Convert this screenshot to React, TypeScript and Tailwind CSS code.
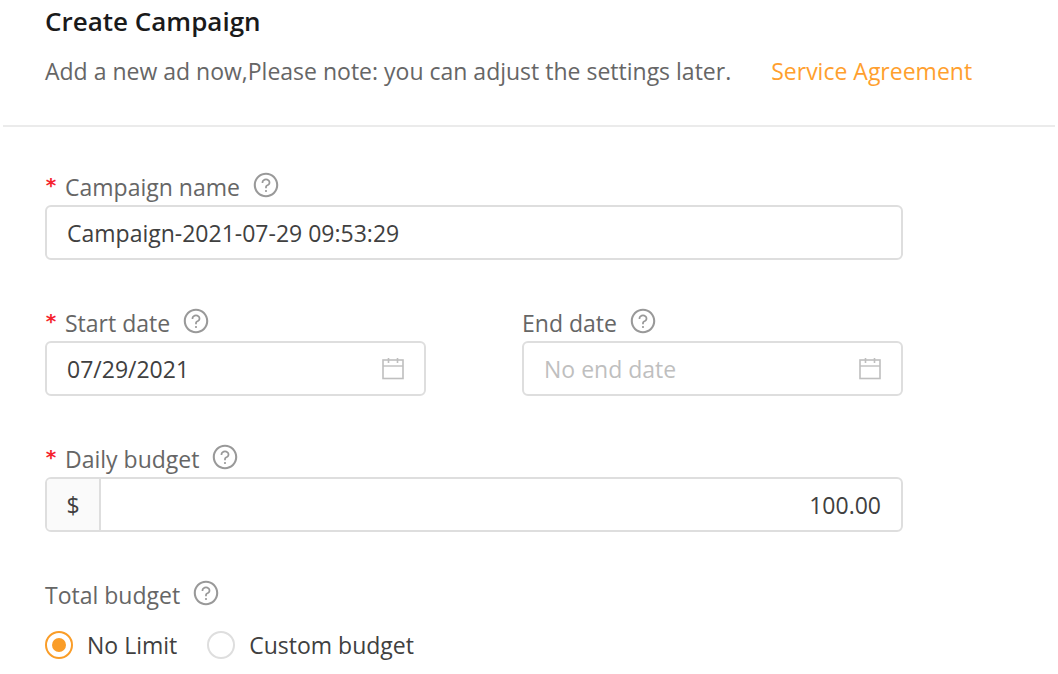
import { useState } from 'react'
import type { ReactNode } from 'react'
import { AiOutlineQuestionCircle } from 'react-icons/ai'

const CalendarIcon = () => (
    <svg width="22" height="22" viewBox="0 0 22 22" fill="none" stroke="#bfbfbf" aria-hidden="true">
        <rect x="1" y="2" width="20" height="18.5" strokeWidth="1.6" />
        <path d="M1 8h20" strokeWidth="1.4" />
        <path d="M6.5 0v5M15.5 0v5" strokeWidth="1.6" />
    </svg>
)

const Required = () => (
    <span
        aria-hidden="true"
        className="w-5 pb-1 font-['DejaVu_Sans_Mono',monospace] text-xl leading-8 font-bold text-[#f5222d]"
    >
        *
    </span>
)

const HelpButton = ({ topic }: { topic: string }) => (
    <button type="button" aria-label={`About ${topic}`} className="ml-3 pb-1 text-[#999]">
        <AiOutlineQuestionCircle size={28} />
    </button>
)

interface FieldProps {
    id: string
    label: string
    required?: boolean
    children: ReactNode
}

const Field = ({ id, label, required, children }: FieldProps) => (
    <div>
        <div className="flex h-9 items-center text-[#666]">
            {required && <Required />}
            <label htmlFor={id}>{label}</label>
            <HelpButton topic={label} />
        </div>
        {children}
    </div>
)

const boxStyle = 'flex h-[55px] items-center rounded-md border-2 border-[#dedede] bg-white'
const inputStyle = 'h-full w-full min-w-0 bg-transparent px-5 outline-none placeholder:text-[#bfbfbf]'

interface DateFieldProps {
    id: string
    label: string
    required?: boolean
    value: string
    placeholder?: string
    onChange: (value: string) => void
}

const DateField = ({ id, label, required, value, placeholder, onChange }: DateFieldProps) => (
    <Field id={id} label={label} required={required}>
        <div className={boxStyle}>
            <input
                id={id}
                type="text"
                className={inputStyle}
                value={value}
                placeholder={placeholder}
                onChange={(e) => onChange(e.target.value)}
            />
            <span className="shrink-0 pr-5">
                <CalendarIcon />
            </span>
        </div>
    </Field>
)

const limits = [
    { value: 'none', label: 'No Limit' },
    { value: 'custom', label: 'Custom budget' },
]

export default function App() {
    const [name, setName] = useState('Campaign-2021-07-29 09:53:29')
    const [startDate, setStartDate] = useState('07/29/2021')
    const [endDate, setEndDate] = useState('')
    const [dailyBudget, setDailyBudget] = useState('100.00')
    const [limit, setLimit] = useState('none')

    return (
        <main className="bg-white px-[3px] font-['Open_Sans','Noto_Sans',sans-serif] text-[23px] leading-9 text-[#404040]">
            <header className="border-b-2 border-[#ebebeb] px-[42px] pt-[3px] pb-9">
                <h1 className="text-[26px] leading-9 font-semibold text-[#1a1a1a]">Create Campaign</h1>
                <div className="mt-[14px] flex flex-wrap gap-x-10 text-[#666]">
                    <p>Add a new ad now,Please note: you can adjust the settings later.</p>
                    <a href="#agreement" className="text-[#ff9f2e]">
                        Service Agreement
                    </a>
                </div>
            </header>

            <form className="flex max-w-[942px] flex-col gap-[45px] px-[42px] pt-[42px]">
                <Field id="name" label="Campaign name" required>
                    <div className={boxStyle}>
                        <input
                            id="name"
                            type="text"
                            className={inputStyle}
                            value={name}
                            onChange={(e) => setName(e.target.value)}
                        />
                    </div>
                </Field>

                <div className="grid grid-cols-2 gap-24">
                    <DateField
                        id="start"
                        label="Start date"
                        required
                        value={startDate}
                        onChange={setStartDate}
                    />
                    <DateField
                        id="end"
                        label="End date"
                        value={endDate}
                        placeholder="No end date"
                        onChange={setEndDate}
                    />
                </div>

                <Field id="daily" label="Daily budget" required>
                    <div className={boxStyle}>
                        <span className="flex h-full w-[54px] shrink-0 items-center justify-center rounded-l border-r-2 border-[#dedede] bg-[#fafafa]">
                            $
                        </span>
                        <input
                            id="daily"
                            type="text"
                            inputMode="decimal"
                            className={`${inputStyle} text-right`}
                            value={dailyBudget}
                            onChange={(e) => setDailyBudget(e.target.value)}
                        />
                    </div>
                </Field>

                <div role="radiogroup" aria-labelledby="total">
                    <div className="flex h-9 items-center text-[#666]">
                        <span id="total">Total budget</span>
                        <HelpButton topic="Total budget" />
                    </div>
                    <div className="mt-[14px] flex gap-[30px]">
                        {limits.map((item) => (
                            <label key={item.value} className="flex items-center gap-[14px]">
                                <input
                                    type="radio"
                                    name="limit"
                                    value={item.value}
                                    checked={limit === item.value}
                                    onChange={() => setLimit(item.value)}
                                    className="grid size-7 appearance-none place-content-center rounded-full border-2 border-[#dedede] before:size-[14px] before:rounded-full checked:border-[#fa9d28] checked:before:bg-[#fa9d28]"
                                />
                                {item.label}
                            </label>
                        ))}
                    </div>
                </div>
            </form>
        </main>
    )
}
